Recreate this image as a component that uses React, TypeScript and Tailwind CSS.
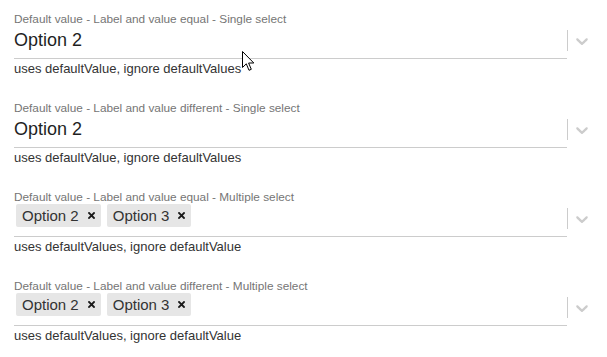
import React from 'react';

type Field = {
  label: string;
  helper: string;
  multi: boolean;
};

const FIELDS: Field[] = [
  {
    label: 'Default value - Label and value equal - Single select',
    helper: 'uses defaultValue, ignore defaultValues',
    multi: false,
  },
  {
    label: 'Default value - Label and value different - Single select',
    helper: 'uses defaultValue, ignore defaultValues',
    multi: false,
  },
  {
    label: 'Default value - Label and value equal - Multiple select',
    helper: 'uses defaultValues, ignore defaultValue',
    multi: true,
  },
  {
    label: 'Default value - Label and value different - Multiple select',
    helper: 'uses defaultValues, ignore defaultValue',
    multi: true,
  },
];

function Chevron() {
  return (
    <svg width="20" height="20" viewBox="0 0 20 20" className="ml-[4px] fill-[#cccccc]">
      <path d="M4.516 7.548c0.436-0.446 1.043-0.481 1.576 0l3.908 3.747 3.908-3.747c0.533-0.481 1.141-0.446 1.574 0 0.436 0.445 0.408 1.197 0 1.615-0.406 0.418-4.695 4.502-4.695 4.502-0.217 0.223-0.502 0.335-0.787 0.335s-0.57-0.112-0.789-0.335c0 0-4.287-4.084-4.695-4.502s-0.436-1.17 0-1.615z" />
    </svg>
  );
}

function Chip({ text }: { text: string }) {
  return (
    <div className="flex h-[23px] items-center rounded-[2px] bg-[#e6e6e6] pl-[6px] pr-[6px]">
      <span className="text-[15px] leading-[18px] text-[#333333]">{text}</span>
      <svg width="7" height="7" viewBox="0 0 7 7" className="ml-[9px]">
        <path d="M1 1L6 6M6 1L1 6" stroke="#1a1a1a" strokeWidth="1.8" strokeLinecap="square" />
      </svg>
    </div>
  );
}

function SelectField({ field }: { field: Field }) {
  return (
    <div className="flex flex-col">
      <div className="text-[11.8px] leading-[14px] text-[#757575]">{field.label}</div>
      <div className="flex h-[33px] items-stretch">
        {field.multi ? (
          <div className="flex flex-1 items-start gap-[6px] border-b border-[#cccccc] pl-[2px]">
            <Chip text="Option 2" />
            <Chip text="Option 3" />
          </div>
        ) : (
          <div className="flex flex-1 items-center border-b border-[#cccccc] pb-[4px]">
            <span className="text-[18px] leading-[22px] text-[#1f1f1f]">Option 2</span>
          </div>
        )}
        <div className="flex items-center pb-[4px]">
          <div className="h-[21px] w-px bg-[#cccccc]" />
          <Chevron />
        </div>
      </div>
      <div className="mt-[2px] text-[13px] leading-[16px] text-[#333333]">{field.helper}</div>
    </div>
  );
}

function Cursor() {
  return (
    <svg
      width="13"
      height="21"
      viewBox="0 0 13 21"
      className="pointer-events-none absolute left-[242px] top-[51px]"
    >
      <path
        d="M0.5 0.5L0.5 16.5L4.3 12.8L7 19.3L9.3 18.3L6.6 12L11.8 12Z"
        fill="#ffffff"
        stroke="#000000"
        strokeWidth="1"
        strokeLinejoin="round"
      />
    </svg>
  );
}

export default function App() {
  return (
    <div
      className="relative h-[357px] w-[607px] overflow-hidden bg-white pl-[14px] pr-[15px] pt-[12px]"
      style={{ fontFamily: '"Liberation Sans", Arial, sans-serif' }}
    >
      <div className="flex flex-col gap-[24px]">
        {FIELDS.map((f) => (
          <SelectField key={f.label} field={f} />
        ))}
      </div>
      <Cursor />
    </div>
  );
}
